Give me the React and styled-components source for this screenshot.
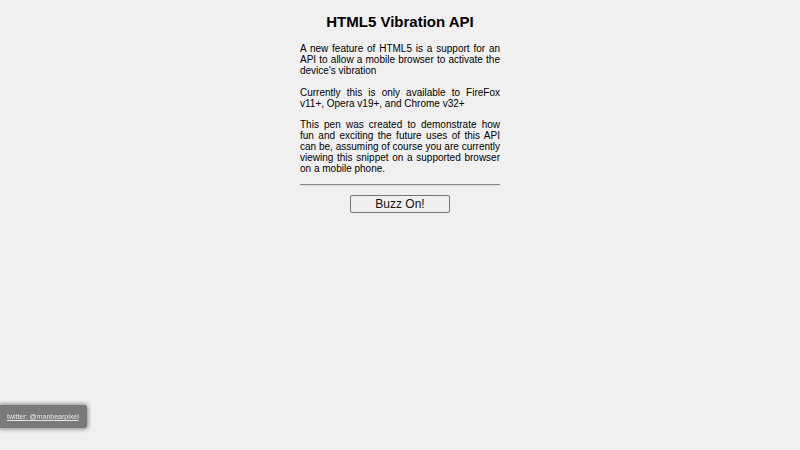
import React, { useCallback } from "react";
import styled, { createGlobalStyle } from "styled-components";

const GlobalStyle = createGlobalStyle`
  html, body {
    margin: 0;
    padding: 0;
    background: #f0f0f0;
  }
  body {
    font-family: "Liberation Sans", Arial, sans-serif;
    font-size: 10px;
    color: #000;
  }
`;

const Page = styled.main`
  width: 200px;
  margin: 0 auto;
  padding-top: 1px;
`;

const Title = styled.h2`
  font-size: 15px;
  font-weight: bold;
  text-align: center;
  margin: 11.5px 0 13.5px;
`;

const Paragraph = styled.p`
  font-size: 10px;
  line-height: normal;
  text-align: justify;
  margin: 10.5px 0 9.5px;
`;

const Divider = styled.hr`
  border: none;
  border-top: 1px solid #8a8a8a;
  border-bottom: 1px solid #d8d8d8;
  margin: 6px 0 9px;
`;

const Actions = styled.div`
  display: flex;
  justify-content: center;
`;

const BuzzButton = styled.button`
  width: 100px;
  height: 18px;
  padding: 0;
  font-family: "Liberation Sans", Arial, sans-serif;
  font-size: 12px;
  color: #111;
  background: #efefef;
  border: 1px solid #767676;
  border-radius: 2px;
  cursor: pointer;
  line-height: 16px;
`;

const Badge = styled.div`
  position: fixed;
  left: 0;
  bottom: 22px;
  height: 23px;
  padding: 0 8px 0 7px;
  display: flex;
  align-items: center;
  background: #7a7a7a;
  border-radius: 0 3px 3px 0;
  box-shadow: 0 0 4px 1px rgba(0, 0, 0, 0.45);
`;

const BadgeLink = styled.a`
  font-family: "Liberation Sans", Arial, sans-serif;
  font-size: 7px;
  color: #e6e6e6;
  text-decoration: underline;
`;

export default function App() {
  const buzz = useCallback(() => {
    if (typeof navigator !== "undefined" && navigator.vibrate) {
      navigator.vibrate([300, 100, 300]);
    }
  }, []);

  return (
    <>
      <GlobalStyle />
      <Page>
        <Title>HTML5 Vibration API</Title>
        <Paragraph>
          A new feature of HTML5 is a support for an API to allow a mobile
          browser to activate the device's vibration
        </Paragraph>
        <Paragraph>
          Currently this is only available to FireFox v11+, Opera v19+, and
          Chrome v32+
        </Paragraph>
        <Paragraph>
          This pen was created to demonstrate how fun and exciting the future
          uses of this API can be, assuming of course you are currently viewing
          this snippet on a supported browser on a mobile phone.
        </Paragraph>
        <Divider />
        <Actions>
          <BuzzButton onClick={buzz}>Buzz On!</BuzzButton>
        </Actions>
      </Page>
      <Badge>
        <BadgeLink href="#">twitter: @manbearpixel</BadgeLink>
      </Badge>
    </>
  );
}
